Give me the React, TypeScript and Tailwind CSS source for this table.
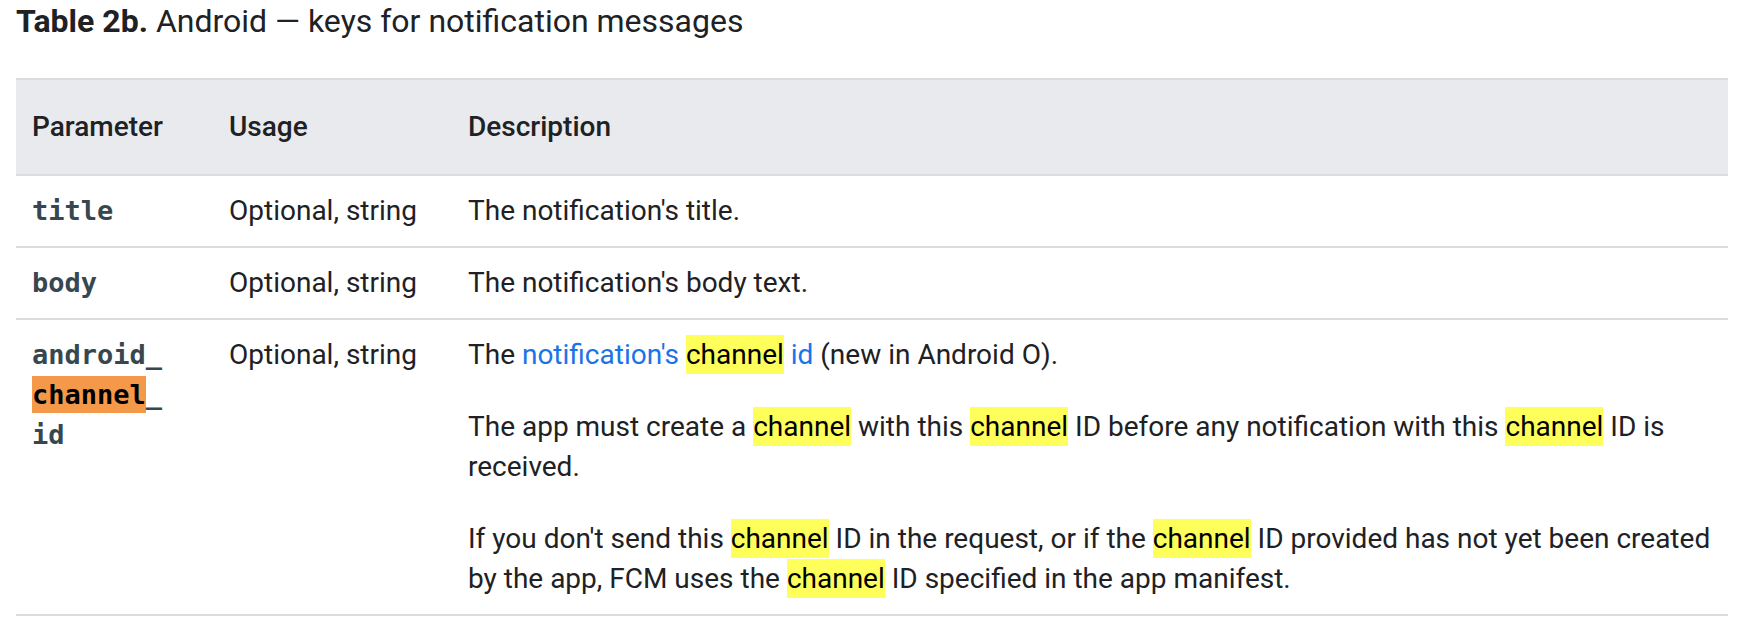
import type { ReactNode } from "react";

const sans = "font-['Roboto','Liberation_Sans',sans-serif]";
const mono = "font-['DejaVu_Sans_Mono','Liberation_Mono',monospace]";

function Hit({ children }: { children: ReactNode }) {
    return <span className="bg-[#ffff5c] py-[3px] text-black">{children}</span>;
}

function Current({ children }: { children: ReactNode }) {
    return <span className="bg-[#f4994a] py-[3px] text-black">{children}</span>;
}

function Code({ children }: { children: ReactNode }) {
    return <code className={`${mono} text-[27px] font-bold text-[#37474f]`}>{children}</code>;
}

export default function App() {
    return (
        <div className={`${sans} bg-white text-[#202124] px-4 min-h-[620px]`}>
            <div className="pt-px text-[32px] leading-[40px]">
                <span className="font-bold">Table 2b.</span> Android — keys for notification messages
            </div>

            <table className="mt-[37px] w-[1712px] table-fixed border-collapse text-[28px] leading-[40px]">
                <colgroup>
                    <col className="w-[197px]" />
                    <col className="w-[239px]" />
                    <col />
                </colgroup>
                <thead>
                    <tr className="border-y-2 border-[#dadce0] bg-[#e8eaed]">
                        <th className="px-4 py-[27px] text-left font-medium">Parameter</th>
                        <th className="px-4 py-[27px] text-left font-medium">Usage</th>
                        <th className="px-4 py-[27px] text-left font-medium">Description</th>
                    </tr>
                </thead>
                <tbody>
                    <tr className="border-b-2 border-[#dadce0]">
                        <td className="pl-4 pr-10 py-[15px] align-top"><Code>title</Code></td>
                        <td className="px-4 py-[15px] align-top">Optional, string</td>
                        <td className="px-4 py-[15px] align-top">The notification's title.</td>
                    </tr>
                    <tr className="border-b-2 border-[#dadce0]">
                        <td className="pl-4 pr-10 py-[15px] align-top"><Code>body</Code></td>
                        <td className="px-4 py-[15px] align-top">Optional, string</td>
                        <td className="px-4 py-[15px] align-top">The notification's body text.</td>
                    </tr>
                    <tr className="border-b-2 border-[#dadce0]">
                        <td className="pl-4 pr-10 py-[15px] align-top">
                            <Code>android_<wbr /><Current>channel</Current>_<wbr />id</Code>
                        </td>
                        <td className="px-4 py-[15px] align-top">Optional, string</td>
                        <td className="px-4 py-[15px] align-top">
                            <div className="flex flex-col gap-8">
                                <p>
                                    The <a href="#" className="text-[#1a73e8]">notification's <Hit>channel</Hit> id</a> (new in Android O).
                                </p>
                                <p>
                                    The app must create a <Hit>channel</Hit> with this <Hit>channel</Hit> ID before any notification with this <Hit>channel</Hit> ID is received.
                                </p>
                                <p>
                                    If you don't send this <Hit>channel</Hit> ID in the request, or if the <Hit>channel</Hit> ID provided has not yet been created by the app, FCM uses the <Hit>channel</Hit> ID specified in the app manifest.
                                </p>
                            </div>
                        </td>
                    </tr>
                </tbody>
            </table>
        </div>
    );
}
